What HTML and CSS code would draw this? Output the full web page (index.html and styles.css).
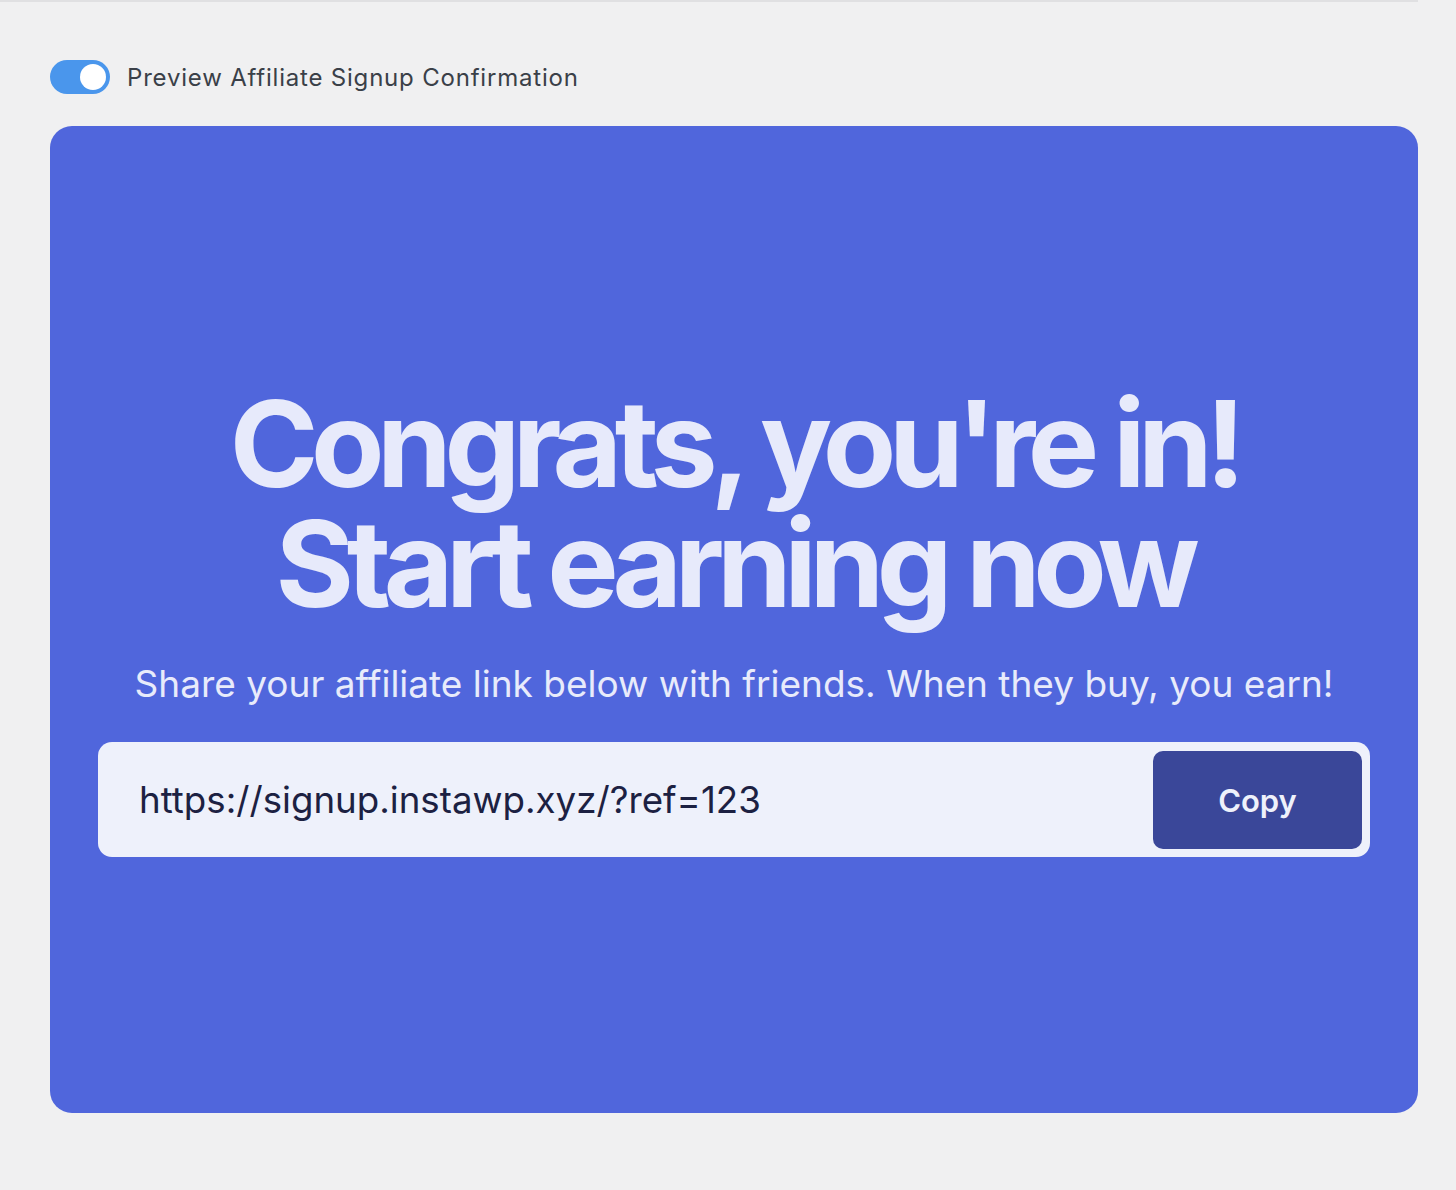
FILE: index.html
```html
<!DOCTYPE html>
<html lang="en">
<head>
<meta charset="utf-8">
<title>Preview Affiliate Signup Confirmation</title>
<link rel="stylesheet" href="styles.css">
</head>
<body>
<div class="page">
  <div class="topline"></div>
  <label class="toggle-row">
    <span class="toggle"><span class="thumb"></span></span>
    <span class="toggle-label">Preview Affiliate Signup Confirmation</span>
  </label>
  <section class="card">
    <h1 class="headline"><span class="line">Congrats, you're in!</span><span class="line">Start earning now</span></h1>
    <p class="subtitle">Share your affiliate link below with friends. When they buy, you earn!</p>
    <div class="linkbox">
      <span class="url">https://signup.instawp.xyz/?ref=123</span>
      <button class="copy">Copy</button>
    </div>
  </section>
</div>
</body>
</html>
```

FILE: styles.css
```css
html, body {
  margin: 0;
  padding: 0;
  background: #f0f0f1;
}
.page {
  width: 1368px;
  padding: 0 38px 0 50px;
  font-family: Inter, "Noto Sans", sans-serif;
}
.topline {
  height: 2px;
  background: #e0e0e2;
  margin-left: -50px;
}
.toggle-row {
  display: flex;
  align-items: center;
  gap: 17px;
  margin-top: 57px;
  height: 36px;
}
.toggle {
  width: 60px;
  height: 34px;
  border-radius: 17px;
  background: #4a96ec;
  display: flex;
  align-items: center;
  justify-content: flex-end;
  padding: 0 4px;
  box-sizing: border-box;
}
.thumb {
  width: 26px;
  height: 26px;
  border-radius: 50%;
  background: #ffffff;
}
.toggle-label {
  font-size: 24px;
  color: #3a4048;
  letter-spacing: 0.8px;
}
.card {
  margin-top: 31px;
  height: 987px;
  box-sizing: border-box;
  background: #5066dc;
  border-radius: 22px;
  padding: 258px 48px 0;
  display: flex;
  flex-direction: column;
  align-items: center;
}
.headline {
  margin: 0;
  font-size: 120px;
  font-weight: 700;
  letter-spacing: -0.062em;
  color: #e7eafb;
  text-align: center;
  display: flex;
  flex-direction: column;
  align-items: center;
}
.line {
  display: block;
  height: 120px;
  line-height: 120px;
}
.subtitle {
  margin: 38px 0 0;
  font-size: 37px;
  line-height: 44px;
  color: #e8ebfb;
  text-align: center;
  font-weight: 400;
}
.linkbox {
  margin-top: 36px;
  align-self: stretch;
  height: 115px;
  background: #eef1fb;
  border-radius: 14px;
  display: flex;
  align-items: center;
  justify-content: space-between;
  padding: 8px 8px 8px 41px;
  box-sizing: border-box;
}
.url {
  font-size: 36.7px;
  color: #1c2142;
}
.copy {
  width: 209px;
  height: 98px;
  border: 0;
  border-radius: 10px;
  background: #3a4799;
  color: #eef1fb;
  font-family: Inter, "Noto Sans", sans-serif;
  font-size: 31px;
  font-weight: 600;
  margin-top: 1px;
}
```
